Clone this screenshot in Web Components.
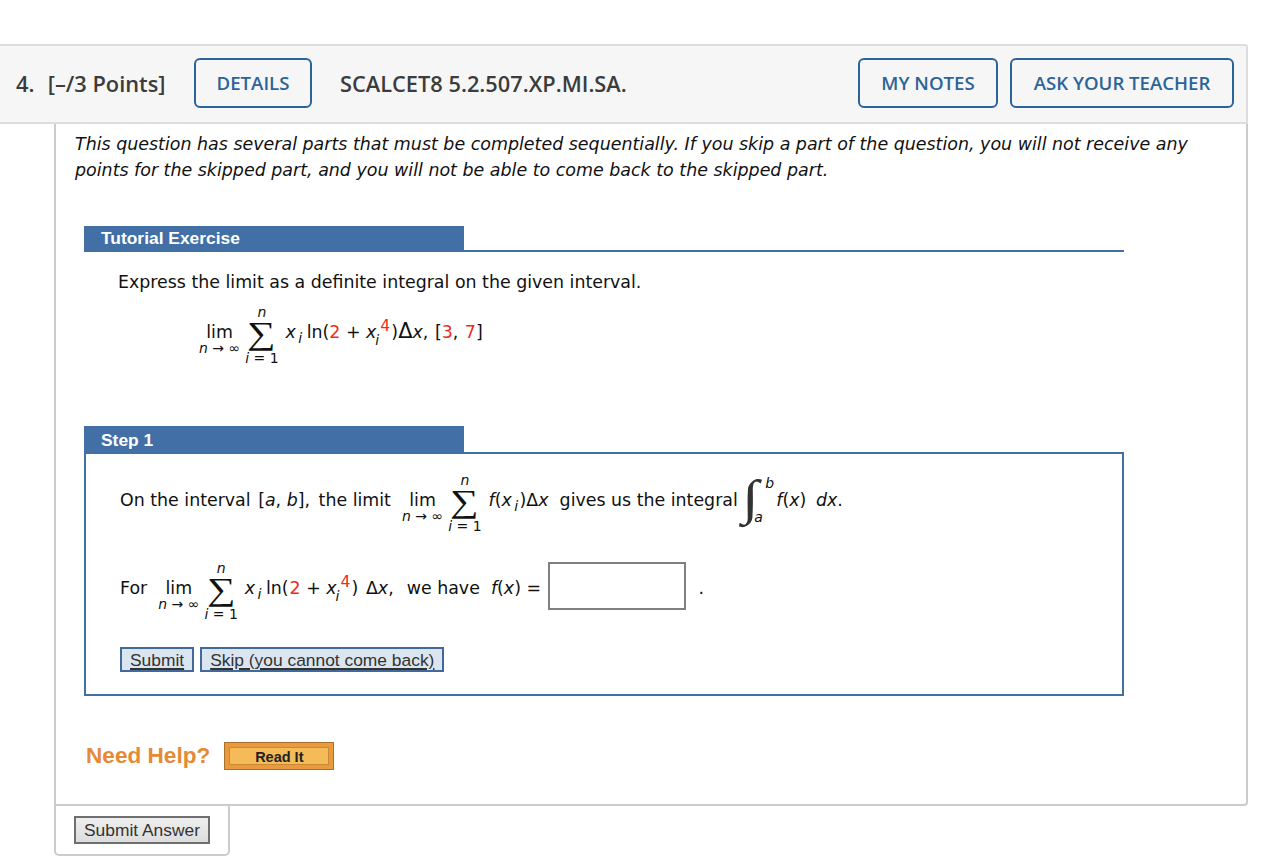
<!DOCTYPE html>
<html>
<head>
<meta charset="utf-8">
<title>Question 4</title>
<style>
  html, body { margin: 0; background: #fff; }
  body { font-family: "DejaVu Sans", Verdana, sans-serif; font-size: 17.4px; color: #111; }
  .red { color: #ec2d20; }
  .row { white-space: nowrap; line-height: 1; }
  .delta { font-size: 21px; line-height: 0; }
</style>
</head>
<body>
<question-card>
  <span slot="points">4.<span style="margin-left:2px">&nbsp; </span>[–/3 Points]</span>
  <span slot="code">SCALCET8 5.2.507.XP.MI.SA.</span>

  <p class="intro">This question has several parts that must be completed sequentially. If you skip a part of the question, you will not receive any points for the skipped part, and you will not be able to come back to the skipped part.</p>
  <tutorial-panel title="Tutorial Exercise">
    <div class="row" style="padding:18px 0 0 34px;height:25px;line-height:25px">Express the limit as a definite integral on the given interval.</div>
    <div class="row" style="padding:11px 0 0 115px;height:52px">
      <m-lim></m-lim><m-sum></m-sum><i>x</i><m-sub>i</m-sub> ln(<span class="red">2</span> + <i>x</i><m-script sup="4" sub="i"></m-script>)<span class="delta">Δ</span><i>x</i>, <span style="margin-left:1px">[</span><span class="red">3</span>,<span style="margin-left:1px"> </span><span class="red">7</span>]
    </div>
  </tutorial-panel>
  <tutorial-panel title="Step 1" boxed style="margin-top:68px">
    <div class="row" style="padding:20px 0 0 34px;height:88px">
      On the interval <span style="margin:0 3px 0 2px">[<i>a</i>, <i>b</i>],</span> the limit&nbsp; <m-lim></m-lim><m-sum></m-sum><i>f</i>(<i>x</i><m-sub style="margin-right:-3px">i</m-sub>)Δ<i>x</i>&nbsp; gives us the integral&nbsp;<m-int></m-int><i>f</i>(<i>x</i>) <i style="margin-left:4px">dx</i>.
    </div>
    <div class="row" style="padding:0 0 0 34px;height:85px">
      For&nbsp; <m-lim></m-lim><m-sum></m-sum><i>x</i><m-sub>i</m-sub> ln(<span class="red" style="margin-left:1px">2</span> + <i>x</i><m-script sup="4" sub="i"></m-script>) <span style="margin-left:2px">Δ</span><i>x</i>,<span style="margin-left:2px">&nbsp; </span>we have&nbsp; <i>f</i>(<i>x</i>) =&nbsp;<answer-box style="margin-left:1px"></answer-box><span style="margin-left:13px">.</span>
    </div>
    <div style="padding:0 0 22px 34px;display:flex;gap:6px">
      <step-button>Submit</step-button>
      <step-button>Skip (you cannot come back)</step-button>
    </div>
  </tutorial-panel>
  <need-help></need-help>
</question-card>

<script>
class QuestionCard extends HTMLElement {
  constructor() {
    super();
    this.attachShadow({ mode: 'open' });
  }

  connectedCallback() {
    this.shadowRoot.innerHTML = `
      <style>
        :host { display: block; width: 1248px; padding-top: 44px; }
        .head {
          display: flex; align-items: center; height: 74px; padding-bottom: 2px;
          background: #f6f6f6; border: 2px solid #ddd; border-left: 0; border-radius: 0 3px 0 0;
          padding-left: 16px; padding-right: 12px;
          font-family: "Open Sans", sans-serif; font-weight: 600; font-size: 21.8px; color: #3c3c3c;
        }
        .points { width: 178px; white-space: nowrap; }
        .code { margin-left: 28px; white-space: nowrap; }
        .spacer { flex: 1; }
        .btn {
          display: flex; align-items: center; justify-content: center; box-sizing: border-box;
          height: 50px; padding-bottom: 2px; border: 2px solid #2b6498; border-radius: 6px; color: #2b6498;
          font-size: 18.6px; white-space: nowrap;
        }
        .body {
          margin-left: 54px; border: 2px solid #ccc; border-top: 0;
          padding: 7px 0 0 19px; height: 682px; box-sizing: border-box;
          border-radius: 0 0 4px 0;
        }
        ::slotted(.intro) { margin: 0 0 43px; line-height: 26px; width: 1130px; font-style: italic; font-size: 17.45px; }
        .foot {
          margin-left: 54px; width: 176px; height: 50px; box-sizing: border-box;
          border: 2px solid #ccc; border-top: 0; border-radius: 0 0 5px 5px; padding: 10px 0 0 18px;
        }
        .submit {
          box-sizing: border-box; width: 136px; height: 28px; border: 2px solid #6f6f6f;
          background: linear-gradient(#eee, #ddd); display: flex; align-items: center; justify-content: center;
          font-family: "Liberation Sans", sans-serif; font-size: 17.4px; color: #333;
        }
      </style>
      <div class="head">
        <span class="points"><slot name="points"></slot></span>
        <span class="btn" style="width:118px">DETAILS</span>
        <span class="code"><slot name="code"></slot></span>
        <span class="spacer"></span>
        <span class="btn" style="width:140px">MY NOTES</span>
        <span class="btn" style="width:224px;margin-left:12px">ASK YOUR TEACHER</span>
      </div>
      <div class="body"><slot></slot></div>
      <div class="foot"><div class="submit">Submit Answer</div></div>
    `;
  }
}

class TutorialPanel extends HTMLElement {
  constructor() {
    super();
    this.attachShadow({ mode: 'open' });
  }

  connectedCallback() {
    const boxed = this.hasAttribute('boxed');
    this.shadowRoot.innerHTML = `
      <style>
        :host { display: block; width: 1040px; margin-left: 9px; }
        .bar { display: flex; border-bottom: 2px solid #416fa6; }
        .title {
          width: 380px; box-sizing: border-box; height: ${boxed ? 26 : 24}px;
          background: #416fa6; color: #fff; padding-left: 17px;
          font: bold 17.4px/${boxed ? 28 : 25}px "Liberation Sans", sans-serif;
        }
        .content { ${boxed ? 'border: 2px solid #416fa6; border-top: 0;' : ''} }
      </style>
      <div class="bar"><div class="title">${this.getAttribute('title')}</div></div>
      <div class="content"><slot></slot></div>
    `;
  }
}

class MLim extends HTMLElement {
  constructor() {
    super();
    this.attachShadow({ mode: 'open' });
  }

  connectedCallback() {
    this.shadowRoot.innerHTML = `
      <style>
        :host { display: inline-flex; flex-direction: column; align-items: center; line-height: 17px; }
        .under { font-size: 14px; line-height: 14px; white-space: nowrap; }
      </style>
      <span>lim</span>
      <span class="under"><i>n</i> → ∞</span>
    `;
  }
}

class MSum extends HTMLElement {
  constructor() {
    super();
    this.attachShadow({ mode: 'open' });
  }

  connectedCallback() {
    this.shadowRoot.innerHTML = `
      <style>
        :host {
          display: inline-flex; flex-direction: column; align-items: center; margin: 0 7px 0 5px;
          vertical-align: 21px; font-size: 14px; line-height: 13px;
        }
        .sigma { font: 32px/28px "Liberation Serif", serif; height: 30px; transform: scaleX(1.25); }
        .low { line-height: 14px; margin-top: 2px; white-space: nowrap; }
      </style>
      <i>n</i>
      <span class="sigma">∑</span>
      <span class="low"><i>i</i> = 1</span>
    `;
  }
}

class MInt extends HTMLElement {
  constructor() {
    super();
    this.attachShadow({ mode: 'open' });
  }

  connectedCallback() {
    this.shadowRoot.innerHTML = `
      <style>
        :host { display: inline-flex; vertical-align: middle; height: 50px; margin: 0 2px 0 4px; }
        .sign {
          font: 49px/50px "Liberation Serif", serif; color: #333; width: 18px;
          transform: translate(-3px, -3px) scaleX(1.25);
        }
        .limits {
          display: flex; flex-direction: column; justify-content: space-between; height: 48px;
          font-size: 14px; line-height: 14px; font-style: italic; width: 9px;
        }
        .b { margin-left: 0; }
        .a { margin-left: -11px; }
      </style>
      <span class="sign">∫</span>
      <span class="limits"><span class="b">b</span><span class="a">a</span></span>
    `;
  }
}

class MSub extends HTMLElement {
  constructor() {
    super();
    this.attachShadow({ mode: 'open' });
  }

  connectedCallback() {
    this.shadowRoot.innerHTML = `
      <style>
        :host { font-size: 14px; font-style: italic; vertical-align: -5px; line-height: 0; margin-left: -2px; }
      </style>
      <slot></slot>
    `;
  }
}

class MScript extends HTMLElement {
  constructor() {
    super();
    this.attachShadow({ mode: 'open' });
  }

  connectedCallback() {
    this.shadowRoot.innerHTML = `
      <style>
        :host { display: inline-flex; flex-direction: column; vertical-align: 7px; line-height: 14px; width: 15px; }
        .sup { color: #ec2d20; font-size: 15.6px; margin-left: 4px; }
        .sub { font-size: 14px; font-style: italic; margin-left: -1px; }
      </style>
      <span class="sup">${this.getAttribute('sup')}</span>
      <span class="sub">${this.getAttribute('sub')}</span>
    `;
  }
}

class AnswerBox extends HTMLElement {
  constructor() {
    super();
    this.attachShadow({ mode: 'open' });
  }

  connectedCallback() {
    this.shadowRoot.innerHTML = `
      <style>
        :host {
          display: inline-block; box-sizing: border-box; width: 138px; height: 48px;
          vertical-align: -16px; border: 2px solid #808080; background: #fff;
        }
      </style>
    `;
  }
}

class StepButton extends HTMLElement {
  constructor() {
    super();
    this.attachShadow({ mode: 'open' });
  }

  connectedCallback() {
    this.shadowRoot.innerHTML = `
      <style>
        :host {
          display: block; box-sizing: border-box; height: 25px; padding: 0 8px;
          border: 2px solid #41699b; background: #dbe5ef; color: #333;
          font: 17.4px/23px "Liberation Sans", sans-serif;
          text-decoration: underline 2px #333; text-underline-offset: 2px;
        }
      </style>
      <slot></slot>
    `;
  }
}

class NeedHelp extends HTMLElement {
  constructor() {
    super();
    this.attachShadow({ mode: 'open' });
  }

  connectedCallback() {
    this.shadowRoot.innerHTML = `
      <style>
        :host { display: flex; align-items: center; gap: 14px; margin: 46px 0 0 11px; height: 28px; }
        .label { font: bold 22.6px "Liberation Sans", sans-serif; color: #e58a35; }
        .read {
          box-sizing: border-box; width: 110px; height: 28px; padding: 4px;
          border: 1px solid #a9722c; background: #ea9a3c;
        }
        .inner {
          box-sizing: border-box; height: 100%; padding-top: 1px; background: #f4bb58; border: 1px solid #c98a35;
          display: flex; align-items: center; justify-content: center;
          font: bold 14.5px "Liberation Sans", sans-serif; color: #222;
        }
      </style>
      <span class="label">Need Help?</span>
      <div class="read"><div class="inner">Read It</div></div>
    `;
  }
}

customElements.define('question-card', QuestionCard);
customElements.define('tutorial-panel', TutorialPanel);
customElements.define('m-lim', MLim);
customElements.define('m-sum', MSum);
customElements.define('m-int', MInt);
customElements.define('m-sub', MSub);
customElements.define('m-script', MScript);
customElements.define('answer-box', AnswerBox);
customElements.define('step-button', StepButton);
customElements.define('need-help', NeedHelp);
</script>
</body>
</html>
